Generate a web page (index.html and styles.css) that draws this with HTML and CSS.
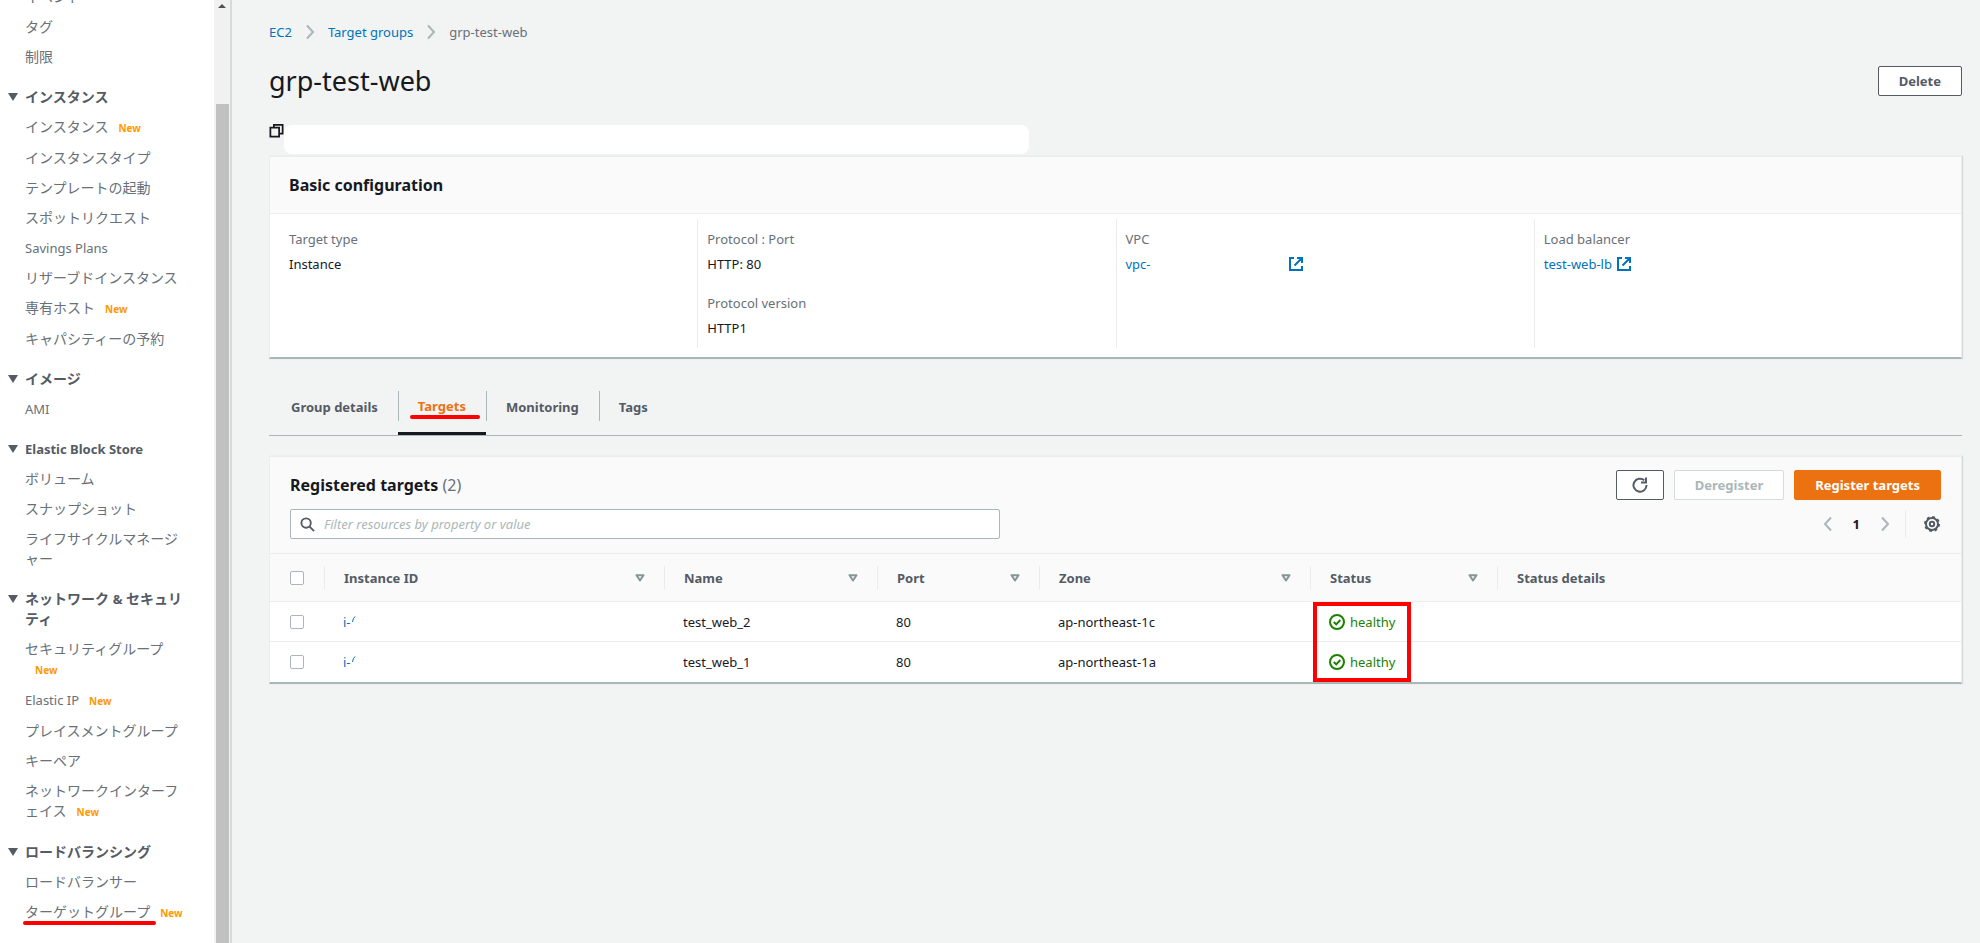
FILE: index.html
```html
<!DOCTYPE html>
<html lang="ja">
<head>
<meta charset="utf-8">
<title>grp-test-web | Target groups</title>
<link rel="stylesheet" href="styles.css">
</head>
<body>
<svg class="defs" aria-hidden="true">
  <symbol id="external" viewBox="0 0 16 16"><path d="M6 2H2v12h12v-4M9 2h5v5M14 2L6.500 9.500" fill="none" stroke="currentColor" stroke-width="2"/></symbol>
  <symbol id="chevron" viewBox="0 0 10 16"><path d="M2 1.500l6 6.500-6 6.500" fill="none" stroke="currentColor" stroke-width="2"/></symbol>
  <symbol id="sort" viewBox="0 0 10 8"><path d="M1.500 1.200h7L5 6.500z" fill="none" stroke="currentColor" stroke-width="2" stroke-linejoin="round"/></symbol>
  <symbol id="ok" viewBox="0 0 16 16"><circle cx="8" cy="8" r="7" fill="none" stroke="currentColor" stroke-width="2"/><path d="M4.800 8l2.400 2.400L11.300 6" fill="none" stroke="currentColor" stroke-width="2"/></symbol>
  <symbol id="cut" viewBox="0 0 5 12"><path d="M4 1.500Q2 3 1.500 7" fill="none" stroke="currentColor" stroke-width="1"/></symbol>
</svg>
<div class="app">
  <nav class="sidebar" aria-label="EC2">
    <div class="menu">
      <ul class="group">
        <li><a href="#">イベント</a></li>
        <li><a href="#">タグ</a></li>
        <li><a href="#">制限</a></li>
      </ul>
      <section>
        <h2>インスタンス</h2>
        <ul class="group">
          <li class="fresh"><a href="#">インスタンス</a><span class="new">New</span></li>
          <li><a href="#">インスタンスタイプ</a></li>
          <li><a href="#">テンプレートの起動</a></li>
          <li><a href="#">スポットリクエスト</a></li>
          <li><a class="latin" href="#">Savings Plans</a></li>
          <li><a href="#">リザーブドインスタンス</a></li>
          <li class="fresh"><a href="#">専有ホスト</a><span class="new">New</span></li>
          <li><a href="#">キャパシティーの予約</a></li>
        </ul>
      </section>
      <section>
        <h2>イメージ</h2>
        <ul class="group">
          <li><a class="latin" href="#">AMI</a></li>
        </ul>
      </section>
      <section>
        <h2><span class="latin">Elastic Block Store</span></h2>
        <ul class="group">
          <li><a href="#">ボリューム</a></li>
          <li><a href="#">スナップショット</a></li>
          <li><a href="#">ライフサイクルマネージャー</a></li>
        </ul>
      </section>
      <section>
        <h2>ネットワーク <span class="latin">&amp;</span> セキュリティ</h2>
        <ul class="group">
          <li class="fresh"><a href="#">セキュリティグループ</a><span class="new">New</span></li>
          <li class="fresh"><a class="latin" href="#">Elastic IP</a><span class="new">New</span></li>
          <li><a href="#">プレイスメントグループ</a></li>
          <li><a href="#">キーペア</a></li>
          <li class="fresh"><a href="#">ネットワークインターフェイス</a><span class="new">New</span></li>
        </ul>
      </section>
      <section>
        <h2>ロードバランシング</h2>
        <ul class="group">
          <li><a href="#">ロードバランサー</a></li>
          <li class="fresh"><a class="marked" href="#">ターゲットグループ</a><span class="new">New</span></li>
        </ul>
      </section>
    </div>
    <div class="scrollbar" aria-hidden="true">
      <svg class="up" viewBox="0 0 8 4"><path d="M0 4l4-4 4 4z" fill="#505050"/></svg>
      <div class="thumb"></div>
    </div>
  </nav>

  <main class="main">
    <nav class="crumbs" aria-label="Breadcrumb">
      <a href="#">EC2</a>
      <svg class="chev"><use href="#chevron"/></svg>
      <a href="#">Target groups</a>
      <svg class="chev"><use href="#chevron"/></svg>
      <span>grp-test-web</span>
    </nav>
    <header class="title">
      <h1>grp-test-web</h1>
      <button class="btn" type="button">Delete</button>
    </header>
    <div class="arn">
      <svg class="copy" viewBox="0 0 16 16"><path d="M5 4V1h10v10h-4M1 4h10v10.500H1z" fill="none" stroke="#16191f" stroke-width="2"/></svg>
      <div class="mask"></div>
    </div>

    <section class="card">
      <div class="card-head"><h2>Basic configuration</h2></div>
      <div class="facts">
        <dl>
          <div><dt>Target type</dt><dd>Instance</dd></div>
        </dl>
        <dl>
          <div><dt>Protocol : Port</dt><dd>HTTP: 80</dd></div>
          <div><dt>Protocol version</dt><dd>HTTP1</dd></div>
        </dl>
        <dl>
          <div><dt>VPC</dt><dd><a class="ext" href="#"><span class="vpc">vpc-</span><svg><use href="#external"/></svg></a></dd></div>
        </dl>
        <dl>
          <div><dt>Load balancer</dt><dd><a class="ext" href="#"><span>test-web-lb</span><svg><use href="#external"/></svg></a></dd></div>
        </dl>
      </div>
    </section>

    <div class="tabs" role="tablist">
      <button type="button" role="tab">Group details</button>
      <button type="button" role="tab" class="active" aria-selected="true"><span>Targets</span></button>
      <button type="button" role="tab">Monitoring</button>
      <button type="button" role="tab">Tags</button>
    </div>

    <section class="card">
      <div class="tools">
        <div class="row">
          <h2>Registered targets <span class="count">(2)</span></h2>
          <div class="actions">
            <button class="btn icon" type="button" aria-label="Refresh"><svg viewBox="0 0 16 16"><path d="M12.300 3.300A6.500 6.500 0 1 0 14.500 8M14 .5v5H9" fill="none" stroke="currentColor" stroke-width="2"/></svg></button>
            <button class="btn" type="button" disabled>Deregister</button>
            <button class="btn primary" type="button">Register targets</button>
          </div>
        </div>
        <div class="row">
          <label class="search">
            <svg viewBox="0 0 16 16"><circle cx="6.500" cy="6.500" r="5" fill="none" stroke="currentColor" stroke-width="2"/><path d="M10 10l5 5" stroke="currentColor" stroke-width="2"/></svg>
            <input type="text" aria-label="Filter" placeholder="Filter resources by property or value">
          </label>
          <div class="pager">
            <button type="button" aria-label="Previous"><svg class="chev flip"><use href="#chevron"/></svg></button>
            <b>1</b>
            <button type="button" aria-label="Next"><svg class="chev"><use href="#chevron"/></svg></button>
            <button class="gear" type="button" aria-label="Settings"><svg viewBox="0 0 16 16" fill="none" stroke="currentColor"><circle cx="8" cy="8" r="6" stroke-width="2"/><circle cx="8" cy="8" r="7" stroke-width="2" stroke-dasharray="2.750 2.750"/><circle cx="8" cy="8" r="2.200" stroke-width="2"/></svg></button>
          </div>
        </div>
      </div>
      <table>
        <colgroup><col class="c-check"><col class="c-id"><col class="c-name"><col class="c-port"><col class="c-zone"><col class="c-status"><col></colgroup>
        <thead>
          <tr>
            <th><input type="checkbox" aria-label="Select all"></th>
            <th><div>Instance ID<svg><use href="#sort"/></svg></div></th>
            <th><div>Name<svg><use href="#sort"/></svg></div></th>
            <th><div>Port<svg><use href="#sort"/></svg></div></th>
            <th><div>Zone<svg><use href="#sort"/></svg></div></th>
            <th><div>Status<svg><use href="#sort"/></svg></div></th>
            <th><div>Status details</div></th>
          </tr>
        </thead>
        <tbody>
          <tr>
            <td><input type="checkbox" aria-label="Select test_web_2"></td>
            <td><a href="#">i-<svg class="cut"><use href="#cut"/></svg></a></td>
            <td>test_web_2</td><td>80</td><td>ap-northeast-1c</td>
            <td class="callout"><span class="ok"><svg><use href="#ok"/></svg>healthy</span></td>
            <td></td>
          </tr>
          <tr>
            <td><input type="checkbox" aria-label="Select test_web_1"></td>
            <td><a href="#">i-<svg class="cut"><use href="#cut"/></svg></a></td>
            <td>test_web_1</td><td>80</td><td>ap-northeast-1a</td>
            <td><span class="ok"><svg><use href="#ok"/></svg>healthy</span></td>
            <td></td>
          </tr>
        </tbody>
      </table>
    </section>
  </main>
</div>
</body>
</html>
```
FILE: styles.css
```css
*, *::before, *::after { box-sizing: border-box; }
body {
  margin: 0;
  background: #f2f3f3;
  color: #16191f;
  font: 13px/20px "Noto Sans", "Noto Sans CJK JP", sans-serif;
}
h1, h2, ul, dl, dd { margin: 0; padding: 0; }
ul { list-style: none; }
a { color: #0073bb; text-decoration: none; }
button, input { font: inherit; color: inherit; margin: 0; }
button { padding: 0; border: 0; background: none; }
.defs { display: none; }
.app { display: flex; height: 100vh; overflow: hidden; }

/* Side navigation */
.sidebar {
  display: flex;
  flex: none;
  width: 232px;
  height: 100vh;
  overflow: hidden;
  background: #fff;
  border-right: 2px solid #d5dbdb;
}
.menu {
  flex: 1;
  display: flex;
  flex-direction: column;
  gap: 20px;
  margin-top: -13px;
  padding: 0 30px 0 25px;
  color: #545b64;
  font-size: 14px;
}
.menu section, .group { display: flex; flex-direction: column; gap: 10px; }
.menu a { color: #687078; }
.menu h2 { position: relative; font-size: 14px; line-height: 20px; font-weight: 700; }
.menu h2::before {
  content: "";
  position: absolute;
  left: -17px;
  top: 6px;
  border: 5px solid transparent;
  border-top: 8px solid #545b64;
  border-bottom: 0;
}
.latin { font-size: 13px; }
.fresh { padding-bottom: 1px; }
.new {
  display: inline-block;
  margin-left: 10px;
  color: #ff9900;
  font-size: 10px;
  font-weight: 700;
  line-height: 16px;
}
.marked { position: relative; }
.marked::after {
  content: "";
  position: absolute;
  left: -2px;
  right: -6px;
  bottom: -4px;
  height: 4px;
  border-radius: 2px;
  background: #f00;
}
.scrollbar { flex: none; width: 16px; padding: 4px 1px 0 2px; background: #f1f1f1; }
.up { display: block; width: 8px; height: 4px; margin: 0 auto 96px 2px; }
.thumb { height: 100%; background: #c1c1c1; }

/* Content */
.main { flex: 1; min-width: 0; padding: 22px 18px 0 37px; }
.crumbs { display: flex; align-items: center; gap: 13px; color: #879596; }
.crumbs span { color: #687078; }
.chev { display: block; width: 10px; height: 16px; color: #aab7b8; }
.flip { transform: scaleX(-1); }
.title { display: flex; justify-content: space-between; align-items: center; padding-top: 20px; }
.title h1 { font-size: 27px; line-height: 38px; font-weight: 400; }
.btn {
  height: 30px;
  padding: 0 20px;
  border: 1px solid #545b64;
  border-radius: 2px;
  background: #fff;
  color: #545b64;
  font-weight: 700;
}
.btn:disabled { border-color: #d5dbdb; color: #aab7b8; }
.primary { border-color: #ec7211; background: #ec7211; color: #fff; }
.icon { padding: 0 15px; }
.icon svg { display: block; width: 16px; height: 16px; }
.arn { display: flex; align-items: flex-start; padding: 24px 0 2px; }
.copy { width: 15px; height: 14px; }
.mask { width: 44%; height: 29px; margin-top: 1px; border-radius: 8px; background: #fff; }
.card {
  background: #fff;
  border: 1px solid #eaeded;
  border-bottom: 2px solid #aab7b8;
  box-shadow: 1px 0 1px #d5dbdb;
}
.card h2 { font-size: 16px; line-height: 22px; font-weight: 700; }
.card-head { padding: 17px 19px; background: #fafafa; border-bottom: 1px solid #eaeded; }
.facts { display: grid; grid-template-columns: repeat(4, 1fr); padding: 5px 9px 9px; }
.facts dl { display: flex; flex-direction: column; gap: 17px; padding: 9px 10px; }
.facts dl + dl { padding-left: 9px; border-left: 1px solid #eaeded; }
.facts dt { color: #687078; line-height: 22px; }
.facts dd { padding-top: 3px; line-height: 22px; }
.ext { display: flex; align-items: center; gap: 4px; }
.ext svg { width: 16px; height: 16px; }
.vpc { width: 158px; }

/* Tabs */
.tabs { display: flex; margin: 21px 0 20px; padding-left: 2px; border-bottom: 1px solid #aab7b8; }
.tabs button { position: relative; height: 55px; padding: 0 20px 2px; color: #545b64; font-weight: 700; }
.tabs button + button::before {
  content: "";
  position: absolute;
  left: 0;
  top: 11px;
  height: 30px;
  border-left: 1px solid #aab7b8;
}
.tabs .active { color: #ec7211; border-bottom: 3px solid #16191f; padding-bottom: 0; }
.active span { position: relative; }
.active span::after {
  content: "";
  position: absolute;
  left: -8px;
  right: -14px;
  bottom: -4px;
  height: 4px;
  border-radius: 2px;
  background: #f00;
}

/* Registered targets */
.tools { display: flex; flex-direction: column; gap: 9px; padding: 13px 20px 14px; background: #fafafa; }
.row { display: flex; justify-content: space-between; align-items: center; }
.count { color: #687078; font-weight: 400; }
.actions { display: flex; gap: 10px; }
.search {
  display: flex;
  align-items: center;
  gap: 9px;
  width: 43%;
  height: 30px;
  padding: 0 9px;
  border: 1px solid #aab7b8;
  border-radius: 2px;
  background: #fff;
  color: #545b64;
}
.search svg { width: 15px; height: 15px; }
.search input { flex: 1; border: 0; padding: 0; outline: 0; background: none; }
.search input::placeholder { color: #aab7b8; font-style: italic; }
.pager { display: flex; align-items: center; gap: 20px; }
.pager .gear { padding: 6px 1px 6px 18px; margin-left: -5px; border-left: 1px solid #eaeded; color: #545b64; }
.gear svg { display: block; width: 16px; height: 16px; }
table { width: 100%; table-layout: fixed; border-collapse: collapse; }
.c-check { width: 54px; }
.c-id { width: 340px; }
.c-name { width: 213px; }
.c-port { width: 162px; }
.c-zone { width: 271px; }
.c-status { width: 187px; }
th { height: 48px; padding: 0; background: #fafafa; border-top: 1px solid #eaeded; border-bottom: 1px solid #eaeded; color: #545b64; text-align: left; }
th:first-child, td:first-child { padding: 0 0 0 20px; }
th div { display: flex; align-items: center; justify-content: space-between; height: 24px; padding: 0 19px; border-left: 1px solid #eaeded; }
th svg { width: 10px; height: 8px; color: #879596; }
td { height: 40px; padding: 0 19px; }
tbody tr + tr td { border-top: 1px solid #eaeded; }
input[type="checkbox"] {
  appearance: none;
  display: block;
  width: 14px;
  height: 14px;
  border: 1px solid #aab7b8;
  border-radius: 2px;
  background: #fff;
}
.cut { width: 5px; height: 12px; }
.ok { display: flex; align-items: center; gap: 5px; color: #1d8102; }
.ok svg { width: 16px; height: 16px; }
.callout { position: relative; }
.callout::after {
  content: "";
  position: absolute;
  left: 3px;
  top: 0;
  width: 98px;
  height: 80px;
  border: 4px solid #f00;
}
```
